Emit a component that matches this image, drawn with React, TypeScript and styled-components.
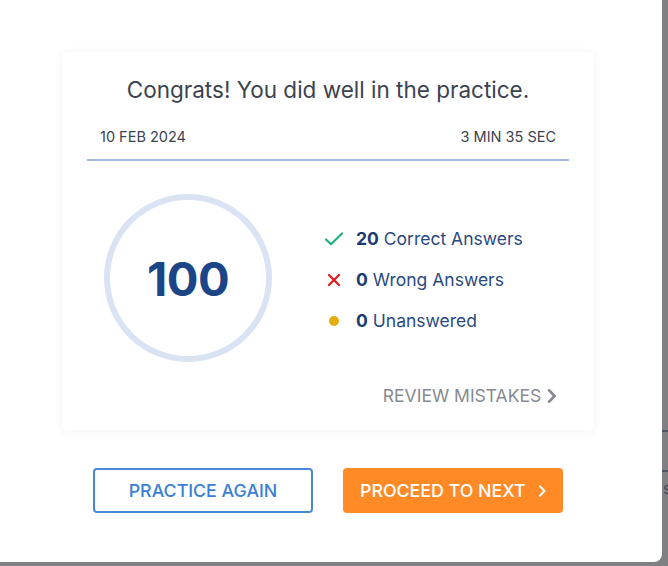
import * as React from "react";
import styled, { createGlobalStyle } from "styled-components";

const GlobalStyle = createGlobalStyle`
  html, body {
    margin: 0;
    padding: 0;
    background: #7f8084;
  }
  body {
    font-family: Inter, "Noto Sans", "Liberation Sans", sans-serif;
  }
`;

const Backdrop = styled.div`
  width: 668px;
  height: 566px;
  background: #7f8084;
  position: relative;
  overflow: hidden;
`;

// bits of the page behind the overlay, peeking out on the right
const BehindLine = styled.div<{ $top: number }>`
  position: absolute;
  right: 0;
  top: ${(p) => p.$top}px;
  width: 6px;
  height: 2px;
  background: #4d5566;
`;

const BehindText = styled.span`
  position: absolute;
  right: -3px;
  top: 479px;
  font-size: 15px;
  color: #3e4a5e;
`;

const Modal = styled.div`
  width: 662px;
  height: 562px;
  background: #ffffff;
  border-bottom-right-radius: 8px;
  box-sizing: border-box;
  padding: 52px 68px 0 62px;
  display: flex;
  flex-direction: column;
  align-items: stretch;
`;

const Card = styled.div`
  width: 532px;
  height: 378px;
  box-sizing: border-box;
  background: #ffffff;
  border-radius: 4px;
  box-shadow: 0 1px 10px rgba(40, 70, 130, 0.07);
  padding: 24px 25px 0;
  display: flex;
  flex-direction: column;
`;

const Title = styled.h2`
  margin: 0;
  font-size: 22.5px;
  line-height: 28px;
  font-weight: 400;
  color: #3c4350;
  text-align: center;
`;

const MetaRow = styled.div`
  margin-top: 24px;
  display: flex;
  justify-content: space-between;
  padding: 0 13px 13px;
  border-bottom: 2px solid #a9b6e6;
  font-size: 14.5px;
  line-height: 18px;
  color: #3c4350;
  text-transform: uppercase;
`;

const Body = styled.div`
  margin-top: 33px;
  display: flex;
  align-items: center;
  padding-left: 17px;
`;

const ScoreRing = styled.div`
  width: 168px;
  height: 168px;
  box-sizing: border-box;
  border-radius: 50%;
  border: 6px solid #d9e3f4;
  display: flex;
  align-items: center;
  justify-content: center;
  font-size: 47px;
  font-weight: 700;
  color: #1b4587;
  letter-spacing: -0.5px;
`;

const Stats = styled.ul`
  list-style: none;
  margin: 4px 0 0 51px;
  padding: 0;
  display: flex;
  flex-direction: column;
  gap: 17px;
`;

const Stat = styled.li`
  display: flex;
  align-items: center;
  font-size: 17.5px;
  line-height: 24px;
  color: #2a4a80;
`;

const StatIcon = styled.span`
  width: 22px;
  display: flex;
  align-items: center;
  justify-content: center;
  margin-right: 11px;
`;

const Dot = styled.span`
  width: 10px;
  height: 10px;
  border-radius: 50%;
  background: #e5ad12;
`;

const Count = styled.b`
  font-weight: 700;
  color: #1d3b70;
  margin-right: 5px;
`;

const ReviewLink = styled.a`
  align-self: flex-end;
  margin-top: 24px;
  margin-right: 12px;
  display: flex;
  align-items: center;
  gap: 6px;
  font-size: 17.5px;
  line-height: 20px;
  color: #878a90;
  text-transform: uppercase;
  cursor: pointer;
`;

const Actions = styled.div`
  width: 532px;
  margin-top: 38px;
  display: flex;
  justify-content: center;
  gap: 30px;
`;

const Button = styled.button<{ $primary?: boolean }>`
  width: 220px;
  height: 45px;
  box-sizing: border-box;
  border-radius: 4px;
  font-family: inherit;
  font-size: 17.8px;
  font-weight: 500;
  text-transform: uppercase;
  display: flex;
  align-items: center;
  justify-content: center;
  gap: 12px;
  cursor: pointer;
  border: 2px solid ${(p) => (p.$primary ? "#ff8a26" : "#4a88d6")};
  background: ${(p) => (p.$primary ? "#ff8a26" : "#ffffff")};
  color: ${(p) => (p.$primary ? "#ffffff" : "#3a80d4")};
`;

const Chevron = ({ color, size = 12, weight = 2 }: { color: string; size?: number; weight?: number }) => (
  <svg width={size * 0.7} height={size} viewBox="0 0 7 12" fill="none">
    <polyline points="1.2,1.2 5.8,6 1.2,10.8" stroke={color} strokeWidth={weight} strokeLinecap="round" strokeLinejoin="round" />
  </svg>
);

const CheckIcon = () => (
  <svg width="20" height="16" viewBox="0 0 20 16" fill="none">
    <polyline points="2,8.5 7,13.2 18,2.5" stroke="#1eb27a" strokeWidth="2.2" strokeLinecap="round" strokeLinejoin="round" />
  </svg>
);

const CrossIcon = () => (
  <svg width="14" height="14" viewBox="0 0 14 14" fill="none">
    <path d="M2 2 L12 12 M12 2 L2 12" stroke="#e01c1c" strokeWidth="2.2" strokeLinecap="round" />
  </svg>
);

const stats = [
  { count: 20, label: "Correct Answers", icon: <CheckIcon /> },
  { count: 0, label: "Wrong Answers", icon: <CrossIcon /> },
  { count: 0, label: "Unanswered", icon: <Dot /> },
];

export default function App() {
  return (
    <>
      <GlobalStyle />
      <Backdrop>
        <BehindLine $top={430} />
        <BehindLine $top={470} />
        <BehindText>s</BehindText>
        <Modal>
          <Card>
            <Title>Congrats! You did well in the practice.</Title>
            <MetaRow>
              <span>10 Feb 2024</span>
              <span>3 min 35 sec</span>
            </MetaRow>
            <Body>
              <ScoreRing>100</ScoreRing>
              <Stats>
                {stats.map((s) => (
                  <Stat key={s.label}>
                    <StatIcon>{s.icon}</StatIcon>
                    <Count>{s.count}</Count>
                    {s.label}
                  </Stat>
                ))}
              </Stats>
            </Body>
            <ReviewLink>
              Review mistakes
              <Chevron color="#878a90" size={14} weight={2.4} />
            </ReviewLink>
          </Card>
          <Actions>
            <Button>Practice again</Button>
            <Button $primary>
              Proceed to next
              <Chevron color="#ffffff" size={12} />
            </Button>
          </Actions>
        </Modal>
      </Backdrop>
    </>
  );
}
